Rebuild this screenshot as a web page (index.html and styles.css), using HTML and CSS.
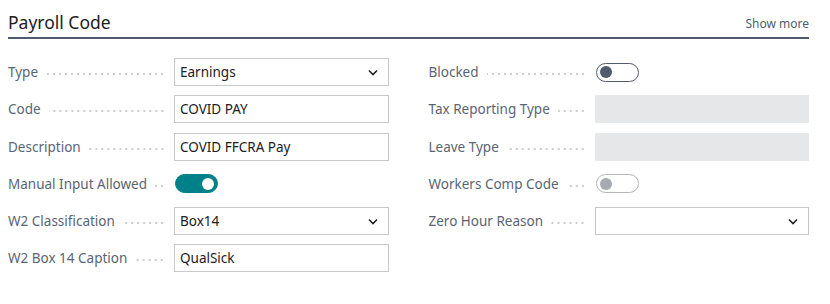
FILE: index.html
```html
<!doctype html>
<html lang="en">
    <head>
        <meta charset="UTF-8" />
        <title>Payroll Code</title>
        <link rel="stylesheet" href="styles.css">
    </head>
    <body>
        <div class="card">
            <div class="card-header">
                <h1>Payroll Code</h1>
                <span class="show-more">Show more</span>
            </div>

            <div class="fields">
                <div class="column">
                    <div class="field-row">
                        <label class="caption">Type</label>
                        <div class="input select">
                            <span>Earnings</span>
                            <svg width="10" height="7" viewBox="0 0 10 7"><path d="M1 1.5 L5 5.5 L9 1.5" fill="none" stroke="#212121" stroke-width="1.6"/></svg>
                        </div>
                    </div>
                    <div class="field-row">
                        <label class="caption">Code</label>
                        <div class="input">COVID PAY</div>
                    </div>
                    <div class="field-row">
                        <label class="caption">Description</label>
                        <div class="input">COVID FFCRA Pay</div>
                    </div>
                    <div class="field-row">
                        <label class="caption">Manual Input Allowed</label>
                        <div class="toggle on"><span class="knob"></span></div>
                    </div>
                    <div class="field-row">
                        <label class="caption">W2 Classification</label>
                        <div class="input select">
                            <span>Box14</span>
                            <svg width="10" height="7" viewBox="0 0 10 7"><path d="M1 1.5 L5 5.5 L9 1.5" fill="none" stroke="#212121" stroke-width="1.6"/></svg>
                        </div>
                    </div>
                    <div class="field-row">
                        <label class="caption">W2 Box 14 Caption</label>
                        <div class="input">QualSick</div>
                    </div>
                </div>

                <div class="column">
                    <div class="field-row">
                        <label class="caption">Blocked</label>
                        <div class="toggle"><span class="knob"></span></div>
                    </div>
                    <div class="field-row">
                        <label class="caption">Tax Reporting Type</label>
                        <div class="input disabled"></div>
                    </div>
                    <div class="field-row">
                        <label class="caption">Leave Type</label>
                        <div class="input disabled"></div>
                    </div>
                    <div class="field-row">
                        <label class="caption">Workers Comp Code</label>
                        <div class="toggle off-disabled"><span class="knob"></span></div>
                    </div>
                    <div class="field-row">
                        <label class="caption">Zero Hour Reason</label>
                        <div class="input select">
                            <span></span>
                            <svg width="10" height="7" viewBox="0 0 10 7"><path d="M1 1.5 L5 5.5 L9 1.5" fill="none" stroke="#212121" stroke-width="1.6"/></svg>
                        </div>
                    </div>
                </div>
            </div>
        </div>
    </body>
</html>
```

FILE: styles.css
```css
body {
    font-family: "Noto Sans", "Open Sans", sans-serif;
    margin: 0;
    padding: 0 21px 0 8px;
    background-color: #ffffff;
    color: #212121;
}
.card-header {
    display: flex;
    justify-content: space-between;
    align-items: flex-end;
    height: 39px;
    border-bottom: 2px solid #505c6d;
    box-sizing: border-box;
    padding-bottom: 4px;
}
.card-header h1 {
    margin: 0;
    font-size: 17.5px;
    font-weight: 400;
    line-height: 22px;
    color: #212121;
}
.show-more {
    font-size: 12px;
    color: #505c6d;
    line-height: 18px;
}
.fields {
    display: grid;
    grid-template-columns: 1fr 1fr;
    column-gap: 40px;
    padding-top: 19px;
}
.column {
    display: flex;
    flex-direction: column;
    gap: 9.25px;
}
.field-row {
    display: flex;
    align-items: center;
    height: 28px;
}
.caption {
    display: flex;
    align-items: center;
    width: 166px;
    flex-shrink: 0;
    font-size: 13.5px;
    color: #5a6573;
    white-space: nowrap;
}
.caption::after {
    content: "";
    flex: 1;
    height: 4px;
    margin: 4px 9px 0 8px;
    background-image: radial-gradient(circle, #c9ccd1 0.7px, transparent 1px);
    background-size: 6px 4px;
    background-position: right center;
}
.input {
    flex: 1;
    height: 28px;
    box-sizing: border-box;
    border: 1px solid #c8c8c8;
    padding: 0 8px 0 5px;
    font-size: 13.5px;
    display: flex;
    align-items: center;
    justify-content: space-between;
    color: #212121;
}
.input.disabled {
    border: none;
    background-color: #e6e7e9;
}
.select svg {
    margin-right: 2px;
}
.toggle {
    width: 43px;
    height: 19px;
    box-sizing: border-box;
    border: 1px solid #505c6d;
    border-radius: 10px;
    position: relative;
    margin-left: 1px;
}
.toggle .knob {
    position: absolute;
    top: 2.5px;
    left: 3px;
    width: 12px;
    height: 12px;
    border-radius: 50%;
    background-color: #505c6d;
}
.toggle.on {
    background-color: #00818a;
    border-color: #00818a;
}
.toggle.on .knob {
    left: auto;
    right: 3px;
    background-color: #ffffff;
}
.toggle.off-disabled {
    border-color: #b3b6ba;
}
.toggle.off-disabled .knob {
    background-color: #a7aab0;
}
```
